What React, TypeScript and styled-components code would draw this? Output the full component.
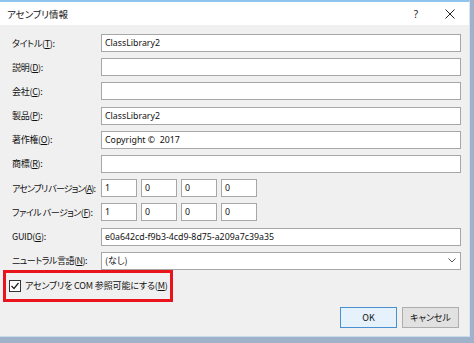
import React from "react";
import styled, { createGlobalStyle } from "styled-components";

const Global = createGlobalStyle`
  html, body { margin: 0; padding: 0; }
  body {
    width: 474px;
    height: 343px;
    overflow: hidden;
    background: #9fb2ca;
    font-family: "Noto Sans CJK JP", "Noto Sans", sans-serif;
    font-feature-settings: "palt";
    color: #111;
  }
`;

const Screen = styled.div`
  width: 474px;
  height: 343px;
  display: flex;
  flex-direction: column;
  align-items: flex-start;
`;

const Window = styled.div`
  width: 470px;
  height: 337px;
  box-sizing: border-box;
  border-top: 2px solid #8fc4ee;
  border-right: 1px solid #d9e6f2;
  border-bottom: 1px solid #c8dcef;
  background: #f0f0f0;
  display: flex;
  flex-direction: column;
`;

const TitleBar = styled.div`
  height: 23px;
  flex: none;
  background: #ffffff;
  display: flex;
  align-items: center;
  padding-left: 7px;
  font-size: 9.5px;
`;

const Title = styled.div`
  flex: 1;
`;

const TitleButton = styled.div<{ $w: number }>`
  width: ${(p) => p.$w}px;
  height: 23px;
  display: flex;
  align-items: center;
  justify-content: center;
  font-family: "Noto Sans", sans-serif;
  font-size: 10px;
  color: #222;
`;

const Body = styled.div`
  flex: 1;
  display: flex;
  flex-direction: column;
  padding: 9px 8px 0 3px;
`;

const Form = styled.div`
  display: grid;
  grid-template-columns: 89px 1fr;
  grid-auto-rows: 18px;
  row-gap: 6.2px;
  margin-left: 9px;
`;

const Label = styled.div<{ $ls?: number }>`
  display: flex;
  align-items: center;
  white-space: nowrap;
  font-size: 9px;
  letter-spacing: ${(p) => p.$ls ?? -0.3}px;
`;

const TextBox = styled.div`
  box-sizing: border-box;
  height: 18px;
  background: #fff;
  border: 1px solid #a7a7a7;
  display: flex;
  align-items: center;
  padding-left: 3px;
  font-family: "Noto Sans", sans-serif;
  font-size: 8.8px;
  white-space: pre;
  overflow: hidden;
`;

const VersionRow = styled.div`
  display: flex;
  gap: 4px;
`;

const VersionBox = styled(TextBox)`
  width: 36px;
`;

const Select = styled(TextBox)`
  font-family: "Noto Sans CJK JP", sans-serif;
  font-size: 9px;
  justify-content: space-between;
  padding-right: 4px;
`;

const Highlight = styled.div`
  width: 170px;
  height: 32px;
  box-sizing: border-box;
  border: 3px solid #e8131b;
  display: flex;
  align-items: center;
  gap: 4px;
  padding-left: 3px;
  font-size: 9px;
  letter-spacing: -0.15px;
  white-space: nowrap;
`;

const CheckBox = styled.div`
  width: 12px;
  height: 12px;
  box-sizing: border-box;
  border: 1px solid #333;
  background: #fff;
  display: flex;
  align-items: center;
  justify-content: center;
  flex: none;
`;

const Footer = styled.div`
  margin-top: auto;
  display: flex;
  justify-content: flex-end;
  gap: 5px;
  padding: 0 2px 8px 0;
`;

const Button = styled.div<{ $primary?: boolean }>`
  width: 57px;
  height: 21px;
  box-sizing: border-box;
  border: 1px solid ${(p) => (p.$primary ? "#4a8fd0" : "#adadad")};
  background: ${(p) => (p.$primary ? "#e5f1fb" : "#e1e1e1")};
  display: flex;
  align-items: center;
  justify-content: center;
  font-size: 9px;
`;

const rows: { label: React.ReactNode; value: string }[] = [
  { label: <>タイトル(<u>T</u>):</>, value: "ClassLibrary2" },
  { label: <>説明(<u>D</u>):</>, value: "" },
  { label: <>会社(<u>C</u>):</>, value: "" },
  { label: <>製品(<u>P</u>):</>, value: "ClassLibrary2" },
  { label: <>著作権(<u>O</u>):</>, value: "Copyright ©  2017" },
  { label: <>商標(<u>R</u>):</>, value: "" },
];

const versions = ["1", "0", "0", "0"];

export default function App() {
  return (
    <>
      <Global />
      <Screen>
        <Window>
          <TitleBar>
            <Title>アセンブリ情報</Title>
            <TitleButton $w={30}>?</TitleButton>
            <TitleButton $w={38}>
              <svg width="10" height="10" viewBox="0 0 10 10">
                <path d="M0.5 0.5 L9.5 9.5 M9.5 0.5 L0.5 9.5" stroke="#222" strokeWidth="1" fill="none" />
              </svg>
            </TitleButton>
          </TitleBar>
          <Body>
            <Form>
              {rows.map((r, i) => (
                <React.Fragment key={i}>
                  <Label>{r.label}</Label>
                  <TextBox>{r.value}</TextBox>
                </React.Fragment>
              ))}
              <Label $ls={-0.9}>アセンブリ バージョン(<u>A</u>):</Label>
              <VersionRow>
                {versions.map((v, i) => (
                  <VersionBox key={i}>{v}</VersionBox>
                ))}
              </VersionRow>
              <Label $ls={-0.5}>ファイル バージョン(<u>F</u>):</Label>
              <VersionRow>
                {versions.map((v, i) => (
                  <VersionBox key={i}>{v}</VersionBox>
                ))}
              </VersionRow>
              <Label>GUID(<u>G</u>):</Label>
              <TextBox>e0a642cd-f9b3-4cd9-8d75-a209a7c39a35</TextBox>
              <Label $ls={-0.5}>ニュートラル言語(<u>N</u>):</Label>
              <Select>
                <span>(なし)</span>
                <svg width="8" height="5" viewBox="0 0 8 5">
                  <path d="M0.5 0.5 L4 4 L7.5 0.5" stroke="#555" strokeWidth="1" fill="none" />
                </svg>
              </Select>
            </Form>
            <Highlight>
              <CheckBox>
                <svg width="10" height="10" viewBox="0 0 10 10">
                  <path d="M1.5 5 L4 7.5 L8.5 2" stroke="#222" strokeWidth="1.2" fill="none" />
                </svg>
              </CheckBox>
              <span>アセンブリを COM 参照可能にする(<u>M</u>)</span>
            </Highlight>
            <Footer>
              <Button $primary>OK</Button>
              <Button>キャンセル</Button>
            </Footer>
          </Body>
        </Window>
      </Screen>
    </>
  );
}
